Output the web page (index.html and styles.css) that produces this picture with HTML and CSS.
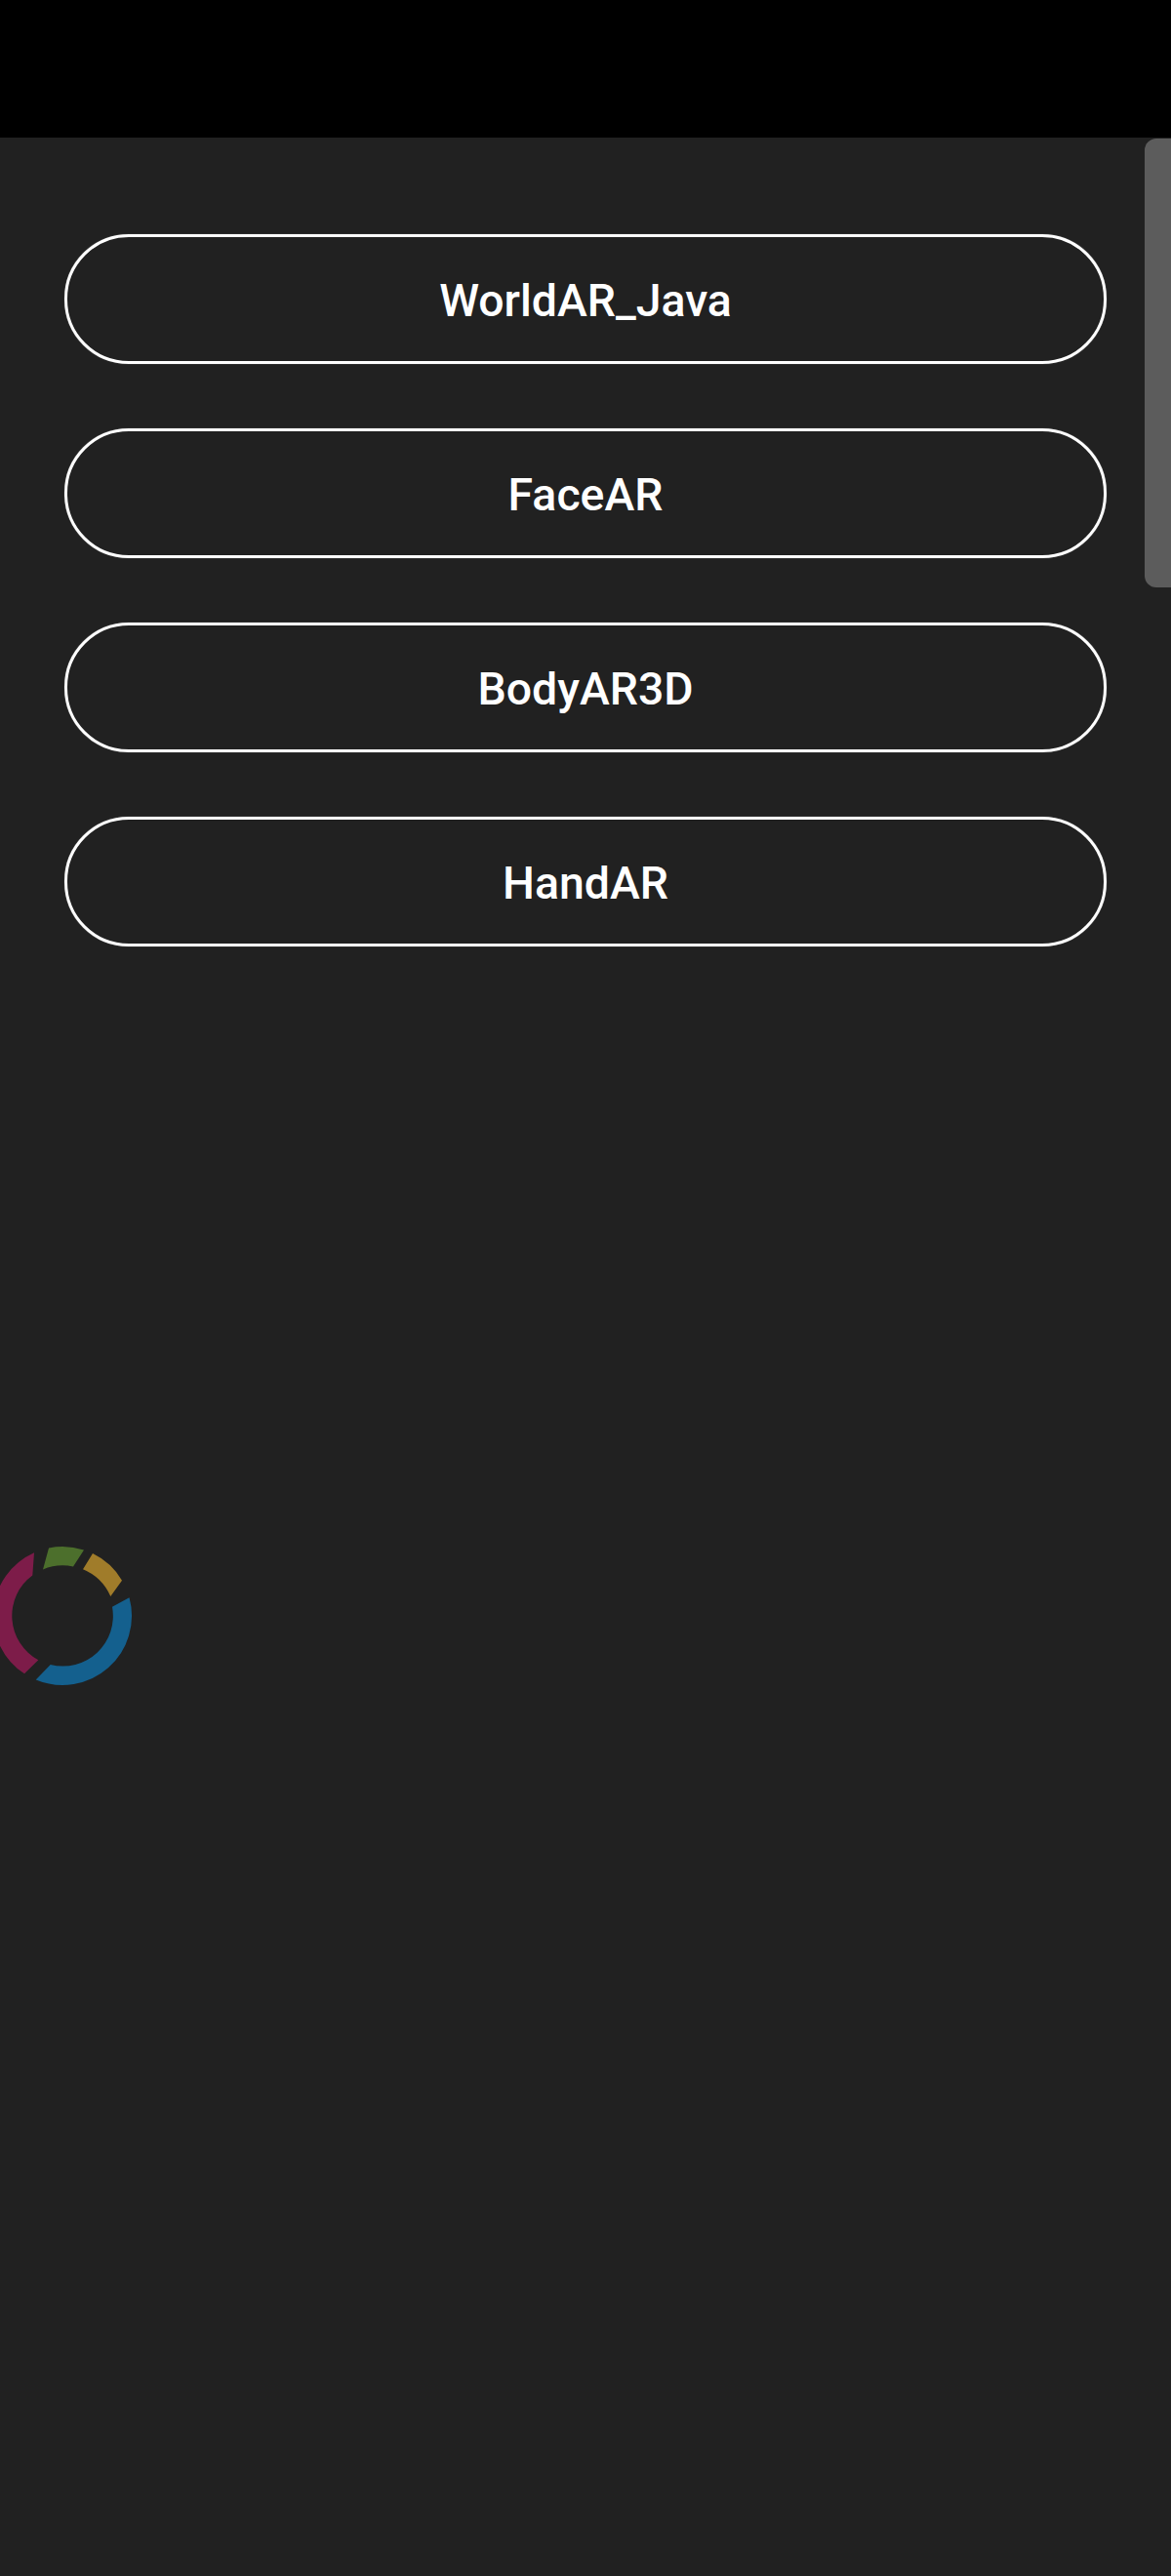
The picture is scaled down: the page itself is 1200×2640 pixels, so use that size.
FILE: index.html
```html
<!DOCTYPE html>
<html lang="en">
<head>
    <meta charset="UTF-8">
    <meta name="viewport" content="width=device-width, initial-scale=1.0">
    <title>AR Samples</title>
    <link rel="stylesheet" href="styles.css">
</head>
<body>

    <div class="status-bar"></div>

    <main class="screen">
        <div class="scroll-thumb"></div>

        <div class="button-list">
            <button class="sample-button">WorldAR_Java</button>
            <button class="sample-button">FaceAR</button>
            <button class="sample-button">BodyAR3D</button>
            <button class="sample-button">HandAR</button>
        </div>

        <svg class="spinner" width="160" height="160" viewBox="-80 -80 160 160">
            <path fill="#4c6f2c" d="M -14 -69.6 A 71 71 0 0 1 22 -67.5 L 11 -50.5 A 51.5 51.5 0 0 0 -20 -47.5 Z" />
            <path fill="#a07c2a" d="M 31 -63.9 A 71 71 0 0 1 61 -36.3 L 49.3 -20 A 53 53 0 0 0 21 -47.8 Z" />
            <path fill="#14608e" d="M 68.5 -18.7 A 71 71 0 0 1 -27.3 65.5 L -12.3 50 A 51.5 51.5 0 0 0 51 -9.3 Z" />
            <path fill="#7d1c49" d="M -39 59.3 A 71 71 0 0 1 -29 -64.8 L -30.7 -41.6 A 51.5 51.5 0 0 0 -24.7 45.2 Z" />
        </svg>
    </main>

</body>
</html>
```

FILE: styles.css
```css
html, body {
    margin: 0;
    padding: 0;
    height: 100%;
    background-color: #212121;
    overflow: hidden;
}
body {
    font-family: Roboto, "Liberation Sans", sans-serif;
    display: flex;
    flex-direction: column;
}
.status-bar {
    height: 141px;
    background-color: #000;
    flex-shrink: 0;
}
.screen {
    position: relative;
    flex: 1;
    background-color: #212121;
}
.button-list {
    display: flex;
    flex-direction: column;
    gap: 66px;
    padding: 99px 66px 0;
}
.sample-button {
    height: 133px;
    box-sizing: border-box;
    border: 3px solid #fff;
    border-radius: 66px;
    background: transparent;
    box-shadow: 0 0 1px rgba(255, 255, 255, 0.6);
    color: #fff;
    font-family: inherit;
    font-size: 46.4px;
    font-weight: 500;
    padding: 2px 0 0;
}
.scroll-thumb {
    position: absolute;
    top: 1px;
    right: 0;
    width: 27px;
    height: 460px;
    background-color: #5c5c5c;
    border-radius: 12px 0 0 12px;
}
.spinner {
    position: absolute;
    left: -16px;
    top: 1435px;
}
```
